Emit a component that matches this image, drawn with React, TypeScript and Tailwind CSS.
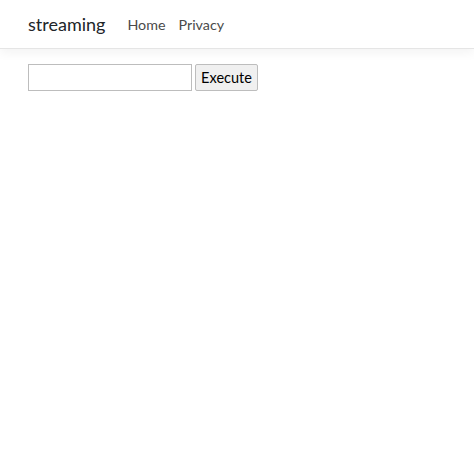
import { FunctionComponent, useState } from "react";

const App: FunctionComponent = () => {
  const [query, setQuery] = useState<string>("");
  return (
    <div className="min-h-screen bg-white text-[#212529]" style={{ fontFamily: 'Lato, "Noto Sans", sans-serif' }}>
      <header className="h-[49px] border-b border-[#e5e5e5] shadow-[0_4px_10px_rgba(0,0,0,0.05)] flex items-center px-[28px]">
        <a className="text-[18px] text-[#212529] mr-[22px]" href="#">
          streaming
        </a>
        <nav className="flex gap-[13px] mt-[2px] text-[14.3px] text-[#4a4a4a]">
          <a href="#">Home</a>
          <a href="#">Privacy</a>
        </nav>
      </header>
      <main className="px-[28px] pt-[15px] flex items-center gap-[3px]">
        <input
          type="text"
          value={query}
          onChange={(e) => setQuery(e.target.value)}
          className="w-[164px] h-[27px] border border-[#bdbdbd] outline-none px-1 text-[15px]"
        />
        <button className="h-[27px] w-[63px] border border-[#bdbdbd] bg-[#f0f0f0] text-[14.5px] text-black rounded-[2px]">
          Execute
        </button>
      </main>
    </div>
  );
};

export default App;
